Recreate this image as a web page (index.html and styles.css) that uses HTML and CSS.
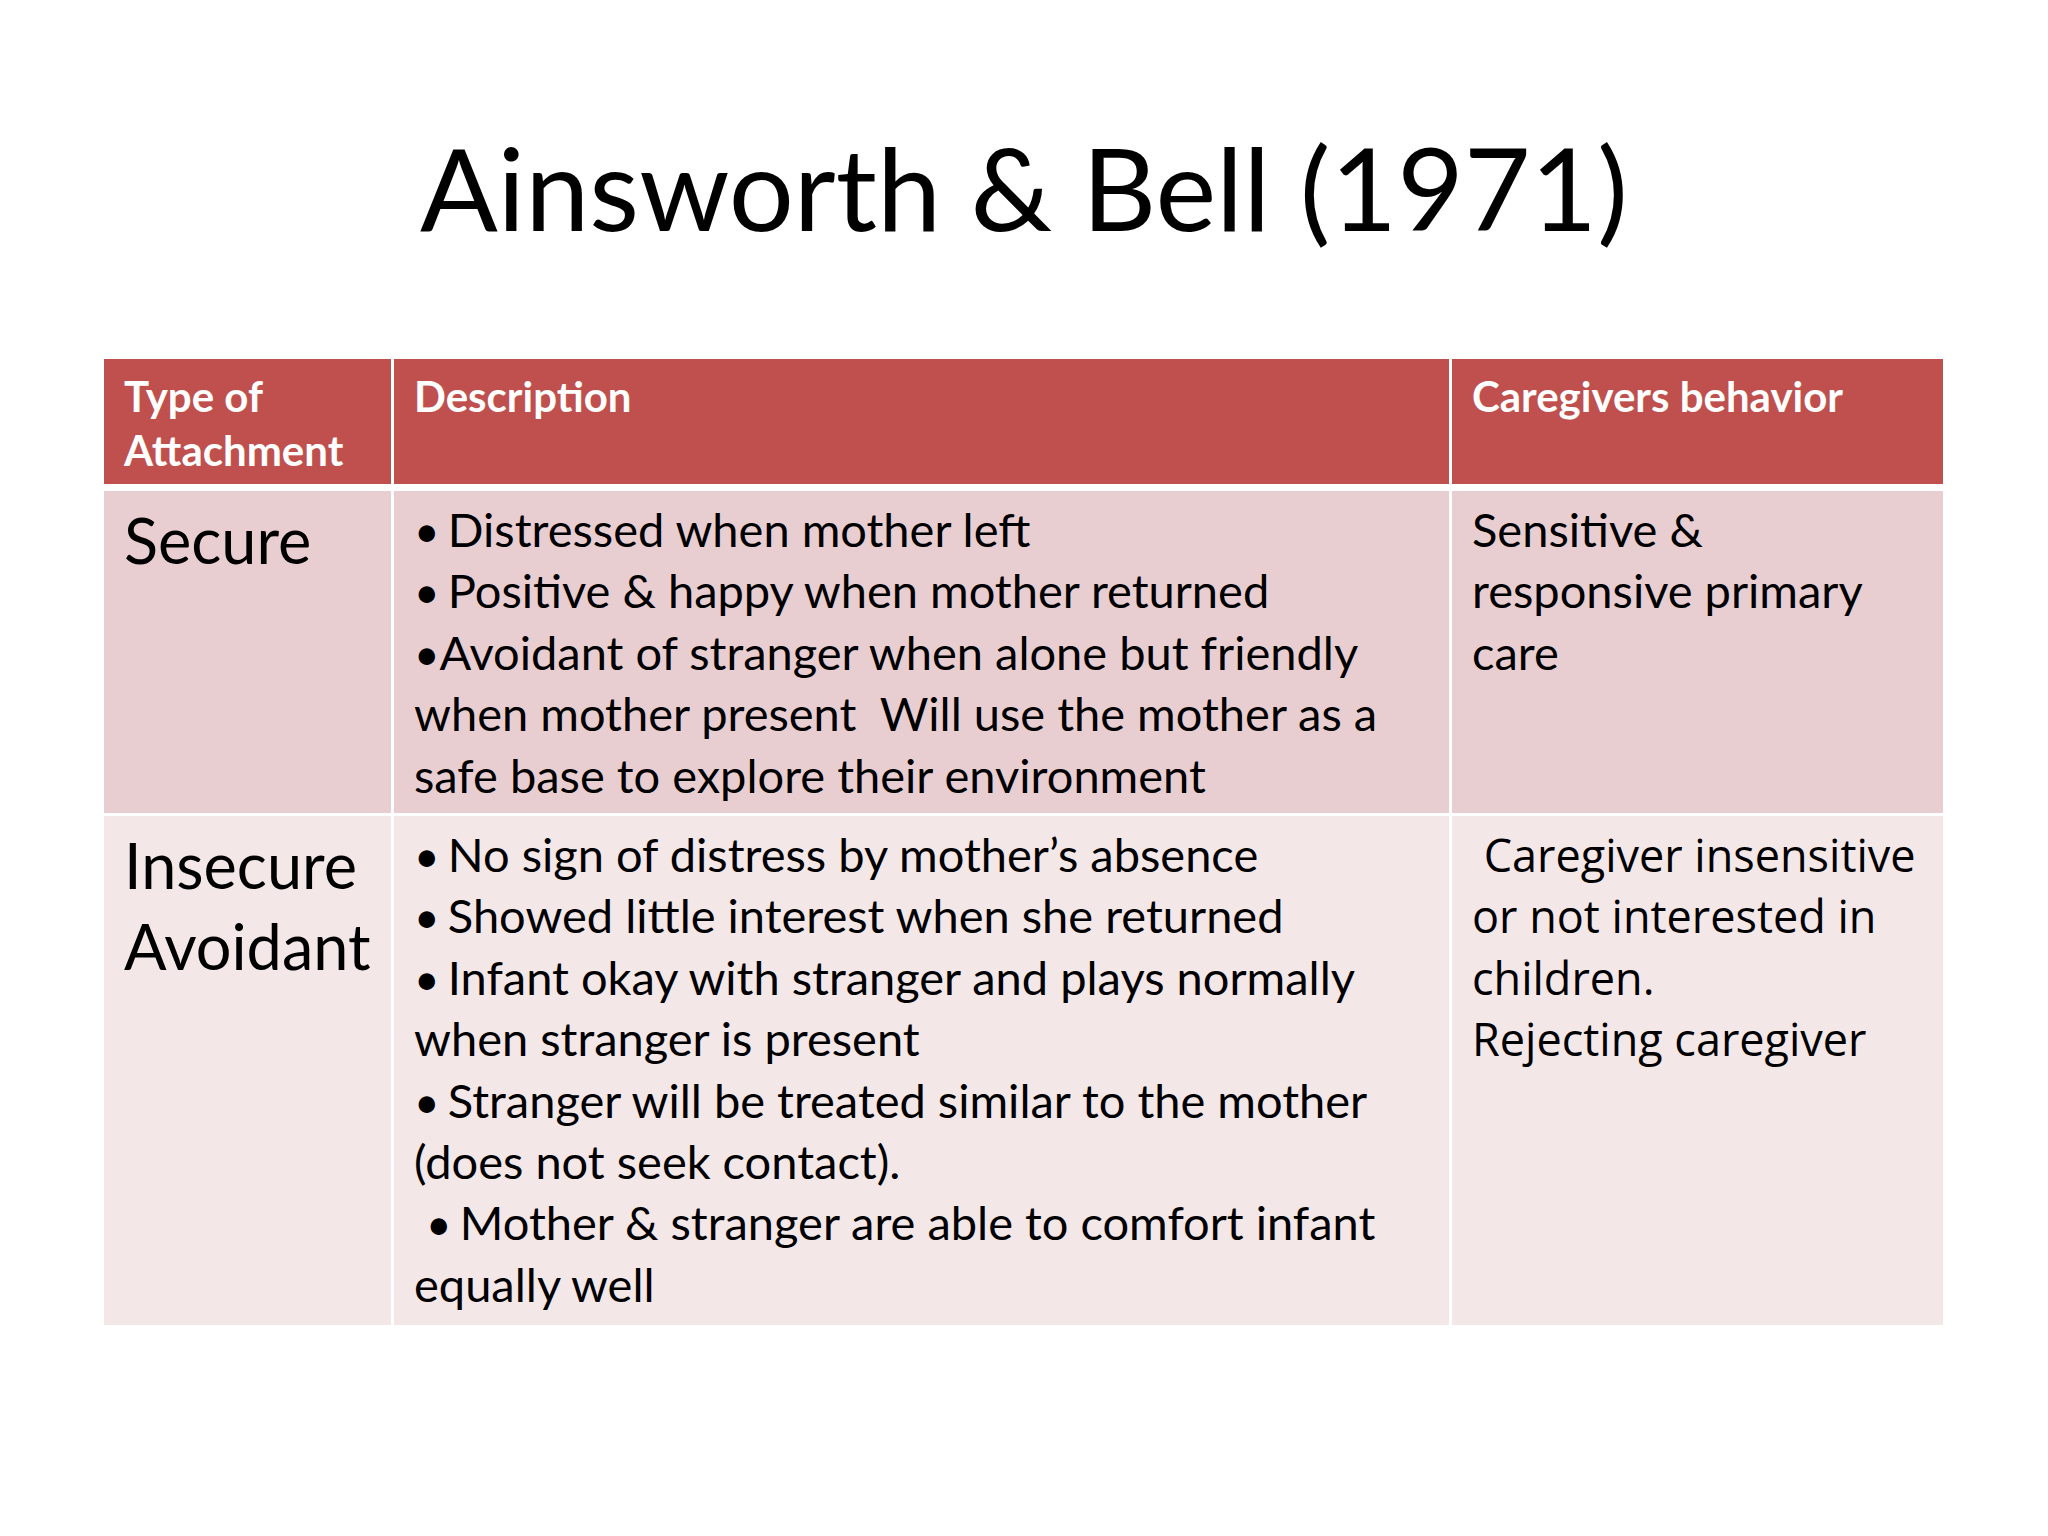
FILE: index.html
```html
<!DOCTYPE html>
<html lang="en">
<head>
<meta charset="utf-8">
<title>Ainsworth &amp; Bell (1971)</title>
<link rel="stylesheet" href="styles.css">
</head>
<body>
<div class="slide">
  <h1 class="title">Ainsworth &amp; Bell (1971)</h1>
  <div class="table">
    <div class="cell head c1">Type of Attachment</div>
    <div class="cell head">Description</div>
    <div class="cell head">Caregivers behavior</div>

    <div class="cell band1 c1 big">Secure</div>
    <div class="cell band1 body">
      <div><span class="bul">• </span>Distressed when mother left</div>
      <div><span class="bul">• </span>Positive &amp; happy when mother returned</div>
      <div><span class="bul">•</span>Avoidant of stranger when alone but friendly when mother present&nbsp; Will use the mother as a safe base to explore their environment</div>
    </div>
    <div class="cell band1 body">Sensitive &amp; responsive primary care</div>

    <div class="cell band2 c1 big">Insecure Avoidant</div>
    <div class="cell band2 body">
      <div><span class="bul">• </span>No sign of distress by mother’s absence</div>
      <div><span class="bul">• </span>Showed little interest when she returned</div>
      <div><span class="bul">• </span>Infant okay with stranger and plays normally when stranger is present</div>
      <div><span class="bul">• </span>Stranger will be treated similar to the mother (does not seek contact).</div>
      <div>&nbsp;<span class="bul">• </span>Mother &amp; stranger are able to comfort infant equally well</div>
    </div>
    <div class="cell band2 alt">
      <div>&nbsp;Caregiver insensitive or not interested in children.</div>
      <div>Rejecting caregiver</div>
    </div>
  </div>
</div>
</body>
</html>
```

FILE: styles.css
```css
html, body {
  margin: 0;
  padding: 0;
  background: #ffffff;
}

body {
  font-family: "Lato", "Open Sans", sans-serif;
  color: #000000;
}

.slide {
  width: 2048px;
  height: 1536px;
  padding-top: 120px;
  box-sizing: border-box;
}

.title {
  margin: 0;
  font-family: "Lato", sans-serif;
  font-weight: 400;
  font-size: 115px;
  line-height: 132px;
  text-align: center;
  color: #000000;
}

.table {
  margin: 107px 0 0 104px;
  width: 1839px;
  display: grid;
  grid-template-columns: 287px 1055px 491px;
  grid-template-rows: 129px 322px 509px;
  column-gap: 3px;
  row-gap: 3px;
  background: #ffffff;
}

.cell {
  padding: 8px 20px 0 20px;
  box-sizing: border-box;
}

.c1 {
  padding-right: 4px;
}

.head {
  background: #c0504d;
  color: #ffffff;
  font-weight: 700;
  font-size: 42px;
  line-height: 54px;
  margin-bottom: 4px;
  padding-top: 10px;
}

.band1 {
  background: #e8ced0;
}

.band2 {
  background: #f3e7e8;
}

.body {
  font-size: 47px;
  line-height: 61.4px;
}

.bul {
  font-size: 44px;
  line-height: 0;
  word-spacing: -3px;
}

.big {
  font-size: 63px;
  line-height: 81px;
}

.alt {
  font-family: "Open Sans", sans-serif;
  font-size: 45px;
  line-height: 61.4px;
}
```
